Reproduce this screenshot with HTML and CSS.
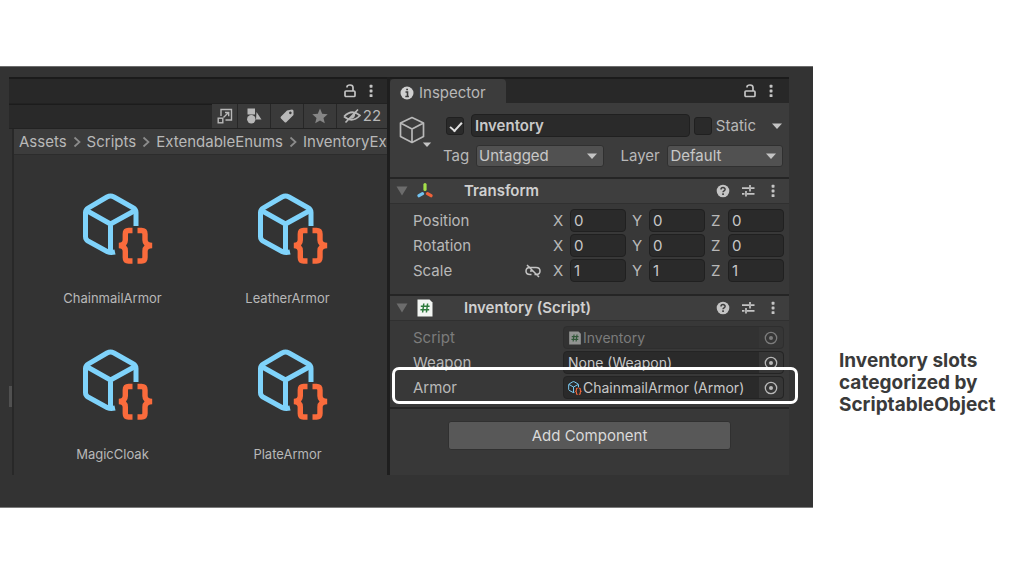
FILE: index.html
```html
<!DOCTYPE html>
<html lang="en">
<head>
    <meta charset="UTF-8">
    <meta name="viewport" content="width=device-width, initial-scale=1.0">
    <link rel="stylesheet" href="styles.css">
    <title>Inventory slots</title>
</head>
<body>
    <!-- shared icons -->
    <svg class="sprite" aria-hidden="true">
        <symbol id="i-lock" viewBox="0 0 14 14">
            <path d="M4 3.500V3Q4 1 7 1Q10 1 10 3.500V7" fill="none" stroke="currentColor" stroke-width="1.700"/>
            <rect x="2" y="7" width="10" height="5.500" rx="1" fill="none" stroke="currentColor" stroke-width="1.700"/>
        </symbol>
        <symbol id="i-dots" viewBox="0 0 16 16">
            <g fill="currentColor"><rect x="6.600" y="1.800" width="2.900" height="2.900" rx=".6"/><rect x="6.600" y="6.500" width="2.900" height="2.900" rx=".6"/><rect x="6.600" y="11.200" width="2.900" height="2.900" rx=".6"/></g>
        </symbol>
        <symbol id="i-help" viewBox="0 0 16 16">
            <circle cx="8" cy="8" r="6.3" fill="currentColor"/>
            <path d="M6 6.6C6 3.9 10.1 4 10.1 6.4C10.1 7.9 8 7.8 8 9.3" fill="none" stroke="#3e3e3e" stroke-width="1.5"/>
            <rect x="7.2" y="10.3" width="1.7" height="1.7" fill="#3e3e3e"/>
        </symbol>
        <symbol id="i-sliders" viewBox="0 0 16 16">
            <path d="M2 5.2h7M11 5.2h3.5M10 2v6.4M2 10.8h2.5M7 10.8h7.5M6 8v5.6" fill="none" stroke="currentColor" stroke-width="1.7"/>
        </symbol>
        <symbol id="i-down" viewBox="0 0 12 8">
            <path d="M1 1.5h10L6 7z" fill="currentColor"/>
        </symbol>
        <symbol id="i-fold" viewBox="0 0 12 10">
            <path d="M0.500 0.500h11L6 9.500z" fill="currentColor"/>
        </symbol>
        <symbol id="i-next" viewBox="0 0 8 12">
            <path d="M1.5 1.5L6.5 6L1.5 10.5" fill="none" stroke="currentColor" stroke-width="1.7"/>
        </symbol>
        <symbol id="i-target" viewBox="0 0 16 16">
            <circle cx="8" cy="8" r="5.7" fill="none" stroke="currentColor" stroke-width="1.3"/>
            <circle cx="8" cy="8" r="2" fill="currentColor"/>
        </symbol>
        <symbol id="i-script" viewBox="0 0 16 18">
            <path d="M0.500 0.500h12L15.500 3.500V17.500H0.500z" fill="#f2f5f2"/>
            <path d="M6.8 4.5L5.6 13.5M10.6 4.5L9.4 13.5M3.8 7.3h8.8M3.4 10.7h8.8" fill="none" stroke="#2d7a3c" stroke-width="1.5"/>
        </symbol>
        <symbol id="i-asset" viewBox="0 0 72 72">
            <g fill="none" stroke="#7fd3fb" stroke-width="5" stroke-linejoin="round">
                <path d="M54 33V19.500Q54 16.500 51 14.800L32 4Q28.500 2.200 25 4L6.500 14.800Q3.500 16.500 3.500 19.500V43.500Q3.500 46.500 6 48L25.500 58.700Q28.500 60 33 59"/>
                <path d="M4.500 17.500L28.500 31L53 17.500M28.500 31V59"/>
            </g>
            <g fill="none" stroke="#fa6b3c" stroke-width="5.400">
                <path d="M50.500 37.500H46.500Q43.300 37.500 43.300 41V47Q43.300 52 37 52.500Q43.300 53 43.300 58V64.500Q43.300 68 46.500 68H50.500"/>
                <path d="M55.500 37.500H59.500Q63 37.500 63 41V47Q63 52 70 52.500Q63 53 63 58V64.500Q63 68 59.500 68H55.500"/>
            </g>
        </symbol>
    </svg>

    <main class="slide">
        <div class="shot">
            <section class="project">
                <div class="tabbar">
                    <button class="icon-btn" aria-label="Lock"><svg class="lock"><use href="#i-lock"/></svg></button>
                    <button class="icon-btn" aria-label="Menu"><svg class="i16"><use href="#i-dots"/></svg></button>
                </div>
                <div class="toolbar">
                    <input class="search" type="text" aria-label="Search">
                    <button class="tool open" aria-label="Open search">
                        <svg class="i16" viewBox="0 0 16 16"><path d="M4 8V1.500H14.500V12H8.500" fill="none" stroke="currentColor" stroke-width="1.400"/><rect x="1.200" y="10.200" width="4.600" height="4.600" fill="none" stroke="currentColor" stroke-width="1.400"/><path d="M6.500 9.500L11.500 4.500M8 4.500h3.700v3.700" fill="none" stroke="currentColor" stroke-width="1.400"/></svg>
                    </button>
                    <button class="tool" aria-label="Filter by type">
                        <svg class="i16" viewBox="0 0 16 16"><path d="M1.500 0.500h7.500v6H1.500zM10.500 4L15.500 11.500H10z" fill="currentColor"/><circle cx="5.300" cy="11.300" r="4.200" fill="currentColor"/></svg>
                    </button>
                    <button class="tool" aria-label="Filter by label">
                        <svg class="i16" viewBox="0 0 16 16"><path fill-rule="evenodd" d="M8 2.500L13 1.500Q14.500 1.500 14.500 3V7L7.500 14Q6.500 15 5.500 14L2 10.500Q1 9.500 2 8.500zM11.300 3.600a1.300 1.300 0 1 0 .1 0z" fill="currentColor"/></svg>
                    </button>
                    <button class="tool dim" aria-label="Favorites">
                        <svg class="i16" viewBox="0 0 16 16"><path d="M8 .5L10.200 5.700L15.700 6.200L11.500 9.900L12.800 15.300L8 12.400L3.200 15.300L4.500 9.900L.3 6.200L5.800 5.700z" fill="currentColor"/></svg>
                    </button>
                    <button class="tool hidden-count">
                        <svg class="eye" viewBox="0 0 18 16"><path d="M1 8.500Q9 .5 17 7.500Q9 15.500 1 8.500M2.500 14.500L15 1.500" fill="none" stroke="currentColor" stroke-width="1.700"/><path d="M6.500 11L12 5Q13.500 10.500 6.500 11z" fill="currentColor"/></svg>22
                    </button>
                </div>
                <div class="browser">
                    <div class="splitter"><span class="grip"></span></div>
                    <div class="folder">
                        <nav class="crumbs">
                            <a href="#">Assets</a><svg class="next"><use href="#i-next"/></svg>
                            <a href="#">Scripts</a><svg class="next"><use href="#i-next"/></svg>
                            <a href="#">ExtendableEnums</a><svg class="next"><use href="#i-next"/></svg>
                            <a href="#">InventoryEx</a>
                        </nav>
                        <div class="assets">
                            <figure class="asset"><svg class="asset-icon"><use href="#i-asset"/></svg><figcaption>ChainmailArmor</figcaption></figure>
                            <figure class="asset"><svg class="asset-icon"><use href="#i-asset"/></svg><figcaption>LeatherArmor</figcaption></figure>
                            <figure class="asset"><svg class="asset-icon"><use href="#i-asset"/></svg><figcaption>MagicCloak</figcaption></figure>
                            <figure class="asset"><svg class="asset-icon"><use href="#i-asset"/></svg><figcaption>PlateArmor</figcaption></figure>
                        </div>
                    </div>
                </div>
            </section>

            <section class="inspector">
                <div class="tabbar">
                    <button class="tab">
                        <svg class="info" viewBox="0 0 14 14"><circle cx="7" cy="7" r="6.500" fill="currentColor"/><path d="M5.500 6h2v4.500M5.300 10.500h3.600M6.200 3.500h1.800" fill="none" stroke="#3c3c3c" stroke-width="1.600"/></svg>Inspector
                    </button>
                    <button class="icon-btn" aria-label="Lock"><svg class="lock"><use href="#i-lock"/></svg></button>
                    <button class="icon-btn" aria-label="Menu"><svg class="i16"><use href="#i-dots"/></svg></button>
                </div>

                <div class="object">
                    <button class="object-icon" aria-label="Select icon">
                        <svg class="cube" viewBox="0 0 26 28"><path d="M13 1.500L24.500 7V20.500L13 26.500L1.500 20.500V7zM1.500 7L13 13L24.500 7M13 13V26.500" fill="none" stroke="currentColor" stroke-width="1.700" stroke-linejoin="round"/></svg>
                        <svg class="down"><use href="#i-down"/></svg>
                    </button>
                    <div class="object-rows">
                        <div class="object-name">
                            <input class="check" type="checkbox" aria-label="Active" checked>
                            <input class="field name" type="text" aria-label="Name" value="Inventory">
                            <input class="check" type="checkbox" id="static">
                            <label class="static" for="static">Static</label>
                            <button class="icon-btn" aria-label="Static options"><svg class="down"><use href="#i-down"/></svg></button>
                        </div>
                        <div class="object-tag">
                            <label for="tag">Tag</label>
                            <div class="select"><select id="tag"><option>Untagged</option></select><svg class="down"><use href="#i-down"/></svg></div>
                            <label class="layer" for="layer">Layer</label>
                            <div class="select"><select id="layer"><option>Default</option></select><svg class="down"><use href="#i-down"/></svg></div>
                        </div>
                    </div>
                </div>

                <div class="component">
                    <div class="component-head">
                        <svg class="fold"><use href="#i-fold"/></svg>
                        <svg class="component-icon" viewBox="0 0 16 18"><g fill="none" stroke-width="3.200" stroke-linecap="round"><path d="M8 2.500v5" stroke="#a4e04a"/><path d="M5.500 11.700L2 13.700" stroke="#72c3f2"/><path d="M10.500 11.700L14 13.700" stroke="#f0623a"/></g></svg>
                        <h2>Transform</h2>
                        <button class="icon-btn" aria-label="Help"><svg class="i16"><use href="#i-help"/></svg></button>
                        <button class="icon-btn" aria-label="Presets"><svg class="i16"><use href="#i-sliders"/></svg></button>
                        <button class="icon-btn" aria-label="Menu"><svg class="i16"><use href="#i-dots"/></svg></button>
                    </div>
                    <div class="props vectors">
                        <div class="prop">
                            <span class="prop-name">Position</span>
                            <label class="axis">X<input class="field" type="text" value="0"></label>
                            <label class="axis">Y<input class="field" type="text" value="0"></label>
                            <label class="axis">Z<input class="field" type="text" value="0"></label>
                        </div>
                        <div class="prop">
                            <span class="prop-name">Rotation</span>
                            <label class="axis">X<input class="field" type="text" value="0"></label>
                            <label class="axis">Y<input class="field" type="text" value="0"></label>
                            <label class="axis">Z<input class="field" type="text" value="0"></label>
                        </div>
                        <div class="prop">
                            <span class="prop-name">Scale</span>
                            <button class="icon-btn" aria-label="Constrain proportions"><svg class="i16" viewBox="0 0 16 16"><path d="M6.500 11.500H5Q1 11.500 1 8Q1 4.500 5 4.500H11Q15 4.500 15 8Q15 11.500 11 11.500H9.500M5 8h3M2 2L14 14" fill="none" stroke="currentColor" stroke-width="1.500"/></svg></button>
                            <label class="axis">X<input class="field" type="text" value="1"></label>
                            <label class="axis">Y<input class="field" type="text" value="1"></label>
                            <label class="axis">Z<input class="field" type="text" value="1"></label>
                        </div>
                    </div>
                </div>

                <div class="component">
                    <div class="component-head">
                        <svg class="fold"><use href="#i-fold"/></svg>
                        <svg class="component-icon"><use href="#i-script"/></svg>
                        <h2>Inventory (Script)</h2>
                        <button class="icon-btn" aria-label="Help"><svg class="i16"><use href="#i-help"/></svg></button>
                        <button class="icon-btn" aria-label="Presets"><svg class="i16"><use href="#i-sliders"/></svg></button>
                        <button class="icon-btn" aria-label="Menu"><svg class="i16"><use href="#i-dots"/></svg></button>
                    </div>
                    <div class="props">
                        <div class="prop disabled">
                            <label class="prop-name" for="script">Script</label>
                            <div class="reference">
                                <svg class="ref-icon"><use href="#i-script"/></svg>
                                <input id="script" type="text" value="Inventory" readonly>
                                <button class="pick" aria-label="Select script"><svg class="i16"><use href="#i-target"/></svg></button>
                            </div>
                        </div>
                        <div class="prop">
                            <label class="prop-name" for="weapon">Weapon</label>
                            <div class="reference">
                                <input id="weapon" type="text" value="None (Weapon)" readonly>
                                <button class="pick" aria-label="Select weapon"><svg class="i16"><use href="#i-target"/></svg></button>
                            </div>
                        </div>
                        <div class="prop marked">
                            <label class="prop-name" for="armor">Armor</label>
                            <div class="reference">
                                <svg class="ref-icon"><use href="#i-asset"/></svg>
                                <input id="armor" type="text" value="ChainmailArmor (Armor)" readonly>
                                <button class="pick" aria-label="Select armor"><svg class="i16"><use href="#i-target"/></svg></button>
                            </div>
                        </div>
                    </div>
                </div>

                <div class="footer">
                    <button class="add">Add Component</button>
                </div>
            </section>
        </div>

        <p class="caption">Inventory slots categorized by ScriptableObject</p>
    </main>
</body>
</html>
```
FILE: styles.css
```css
*{box-sizing:border-box;}
body{margin:0;background-color:#fff;font-family:Inter,"Liberation Sans",sans-serif;font-size:15px;line-height:20px;color:#b8b8b8;}
button,input,select{font:inherit;color:inherit;border:0;margin:0;padding:0;background:none;min-width:0;}
input,select{color:#c8c8c8;}
button{cursor:pointer;}
svg{display:block;flex-shrink:0;}
.sprite{position:absolute;width:0;height:0;}

.slide{display:grid;grid-template-columns:813fr 207fr;align-items:start;padding-top:66px;}
.shot{display:grid;grid-template-columns:378fr 402fr;padding:10px 24px 32px 9px;background-color:#333;border-top:1px solid #6c6c6c;border-bottom:1px solid #7c7c7c;}
.caption{margin:284px 0 0;padding:0 16px 0 26px;font-size:19px;line-height:22px;font-weight:700;color:#3a3a3a;}

/* icons */
.icon-btn{display:flex;align-items:center;justify-content:center;color:#c4c4c4;}
.i16{width:16px;height:16px;}
.lock{width:14px;height:14px;}
.down{width:12px;height:8px;color:#c4c4c4;}
.info{width:14px;height:14px;color:#d0d0d0;}
.eye{width:18px;height:16px;}
.next{width:8px;height:12px;color:#8c8c8c;}

.tabbar{display:flex;align-items:center;justify-content:flex-end;gap:6px;height:26px;padding-right:8px;background-color:#282828;border-top:2px solid #1b1b1b;}

/* project */
.project{display:flex;flex-direction:column;min-width:0;}
.toolbar{display:flex;height:26px;background-color:#3a3a3a;border-top:1px solid #222;border-bottom:1px solid #222;}
.search{flex:1;background-color:#292929;border-top:1px solid #1c1c1c;}
.tool{display:flex;align-items:center;justify-content:center;gap:2px;width:33px;border-left:1px solid #272727;}
.tool.open{width:25px;border-left:0;}
.tool.dim{color:#868686;}
.tool.hidden-count{width:51px;}
.browser{display:flex;flex:1;}
.splitter{display:flex;align-items:flex-end;width:5px;padding-bottom:68px;border-right:2px solid #282828;}
.grip{width:3px;height:21px;background-color:#505050;}
.folder{flex:1;min-width:0;}
.crumbs{display:flex;align-items:center;gap:6px;height:26px;padding-left:5px;background-color:#3c3c3c;border-bottom:1px solid #2c2c2c;}
.crumbs a{color:inherit;text-decoration:none;}
.assets{display:grid;grid-template-columns:1fr 1fr;row-gap:43px;padding:38px 12px 12px 11px;}
.asset{display:flex;flex-direction:column;align-items:center;gap:25px;margin:0;}
.asset-icon{width:72px;height:72px;margin-left:10px;}
.asset figcaption{font-size:13px;line-height:16px;}

/* inspector */
.inspector{min-width:0;background-color:#383838;border-left:3px solid #1e1e1e;}
.inspector .tabbar{padding-right:10px;}
.tab{display:flex;align-items:center;gap:5px;height:24px;margin-right:auto;padding:3px 20px 0 10px;background-color:#3c3c3c;border-radius:4px 4px 0 0;}
.field{height:23px;padding:0 3px;background-color:#2a2a2a;border:1px solid #202020;border-radius:4px;}
.object{display:flex;gap:10px;height:74px;padding:11px 6px 0 9px;background-color:#3c3c3c;}
.object-icon{align-self:flex-start;width:34px;padding-top:2px;}
.cube{width:26px;height:28px;}
.object-icon .down{width:10px;height:7px;margin:-3px 0 0 23px;}
.object-rows{flex:1;min-width:0;}
.object-name{display:flex;align-items:center;padding-left:3px;}
.object-name .name{flex:1;margin:0 4px 0 7px;font-weight:600;}
.check{appearance:none;flex-shrink:0;width:18px;height:18px;background-color:#2a2a2a;border:1px solid #202020;border-radius:3px;}
.check:checked::before{content:"";display:block;width:10px;height:5px;margin:4px 0 0 3px;border-left:2px solid #e0e0e0;border-bottom:2px solid #e0e0e0;transform:rotate(-48deg);}
.static{margin:0 15px 0 4px;}
.object-tag{display:grid;grid-template-columns:33px 129fr 63px 116fr;align-items:center;margin-top:8px;}
.layer{padding-left:16px;}
.select{display:flex;align-items:center;height:22px;padding-right:5px;background-color:#515151;border:1px solid #303030;border-radius:3px;}
.select select{flex:1;appearance:none;height:20px;padding-left:2px;}

.component{border-top:2px solid #252525;}
.component-head{display:flex;align-items:center;gap:9px;height:25px;padding:0 8px 0 6px;background-color:#3e3e3e;border-bottom:1px solid #303030;}
.component-head h2{flex:1;margin:0 0 0 22px;font-size:15px;font-weight:600;color:#d0d0d0;}
.fold{width:12px;height:10px;color:#6c6c6c;}
.component-icon{width:16px;height:18px;}
.props{display:grid;gap:2px;padding:5px 5px 8px 23px;}
.props.vectors{padding-bottom:12px;}
.prop{position:relative;display:flex;align-items:center;gap:6px;height:23px;}
.prop-name{flex:1;}
.prop .icon-btn{margin-right:6px;}
.axis{display:flex;align-items:center;justify-content:space-between;width:73px;}
.axis .field{width:56px;}
.reference{display:flex;align-items:center;width:221px;height:23px;padding-left:4px;background-color:#2a2a2a;border:1px solid #242424;border-radius:4px;font-size:14px;}
.reference input{flex:1;}
.ref-icon{width:14px;height:14px;margin:0 1px 0 0;}
.pick{display:flex;align-items:center;justify-content:center;align-self:stretch;width:24px;background-color:#363636;border-radius:0 4px 4px 0;}
.disabled,.disabled input{color:#7c7c7c;}
.disabled .reference{background-color:#323232;border-color:#2e2e2e;}
.disabled .ref-icon{opacity:.5;}
/* ring around the slot, drawn over the neighbouring rows */
.marked::after{content:"";position:absolute;top:-9px;bottom:-5px;left:-21px;right:-14px;border:3px solid #fff;border-radius:7px;pointer-events:none;}
.footer{display:flex;justify-content:center;padding:12px 0 25px;border-top:2px solid #252525;}
.add{width:71%;height:29px;background-color:#585858;border:1px solid #303030;border-radius:3px;color:#dadada;}
```
